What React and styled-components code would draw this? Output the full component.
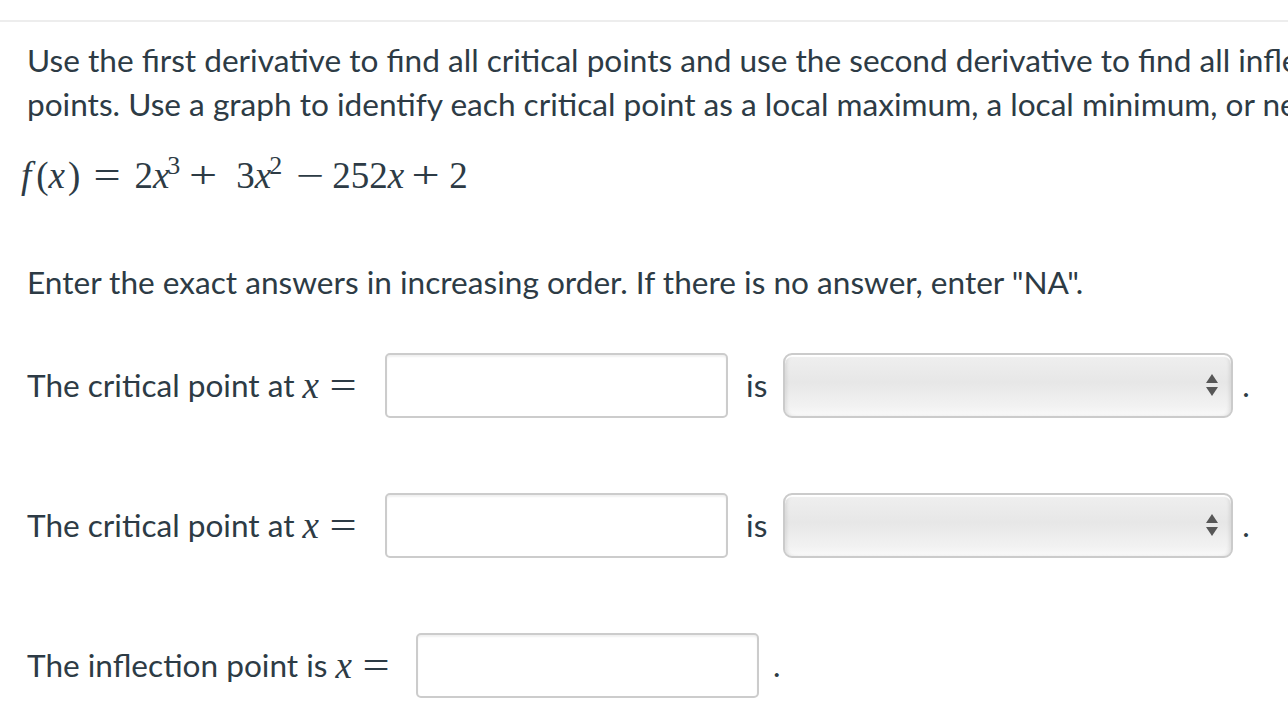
import React from "react";
import styled, { createGlobalStyle } from "styled-components";

const Global = createGlobalStyle`
  html, body {
    margin: 0;
    padding: 0;
    background: #ffffff;
    overflow: hidden;
  }
  body {
    font-family: "Lato", "Noto Sans", sans-serif;
    color: #2d3b45;
  }
`;

const Page = styled.main`
  width: 1288px;
  height: 722px;
  overflow: hidden;
`;

const TopRule = styled.div`
  height: 20px;
  border-bottom: 2px solid #ededed;
`;

const Question = styled.section`
  padding: 16px 0 0 27px;
`;

const Prose = styled.p`
  margin: 0;
  font-size: 31.6px;
  line-height: 44px;
  white-space: nowrap;
`;

const Equation = styled.div`
  margin: 26px 0 0 -6px;
  font-family: "Liberation Serif", "Times New Roman", serif;
  font-size: 37px;
  line-height: 48px;
  white-space: nowrap;
  color: #2d3b45;
`;

const Var = styled.i`
  font-style: italic;
  margin-right: ${(p) => p.$r || 0}px;
`;

const Sup = styled.sup`
  font-size: 26px;
  line-height: 0;
  vertical-align: 14px;
  margin-left: ${(p) => p.$l || 0}px;
`;

const Op = styled.span`
  display: inline-block;
  width: ${(p) => p.$w}px;
  margin: 0 ${(p) => p.$r}px 0 ${(p) => p.$l}px;
  text-align: center;
  transform: scaleX(${(p) => p.$s || 1.35});
`;

const Instruction = styled(Prose)`
  margin-top: 60px;
`;

const Rows = styled.div`
  display: flex;
  flex-direction: column;
  gap: 76px;
  margin-top: 49px;
`;

const Row = styled.div`
  display: flex;
  align-items: center;
  height: 64px;
  font-size: 31.6px;
  white-space: nowrap;
`;

const MathX = styled.span`
  font-family: "Liberation Serif", "Times New Roman", serif;
  font-size: 37px;
  font-style: italic;
  margin-left: 8px;
`;

const Equals = styled.span`
  display: inline-block;
  width: 24px;
  text-align: center;
  font-family: "Liberation Serif", "Times New Roman", serif;
  font-size: 37px;
  margin-left: 12px;
  transform: scaleX(1.3);
`;

const AnswerBox = styled.input`
  box-sizing: border-box;
  width: 343px;
  height: 65px;
  margin-left: ${(p) => p.$offset}px;
  border: 2px solid #cccccc;
  border-radius: 5px;
  background: #ffffff;
  box-shadow: inset 0 2px 2px rgba(0, 0, 0, 0.06);
  outline: none;
  font-family: inherit;
  font-size: 30px;
`;

const Word = styled.span`
  margin-left: 18px;
`;

const Select = styled.div`
  box-sizing: border-box;
  width: 450px;
  height: 65px;
  margin-left: 16px;
  border: 2px solid #cbcbcb;
  border-radius: 9px;
  background: linear-gradient(#efefef 0%, #e7e7e7 45%, #f2f2f2 85%, #f9f9f9 100%);
  box-shadow: inset 0 2px 1px #ffffff, inset 3px 0 4px -2px rgba(0, 0, 0, 0.12),
    inset -3px 0 4px -2px rgba(0, 0, 0, 0.12);
  display: flex;
  align-items: center;
  justify-content: flex-end;
  padding-right: 12px;
`;

const Period = styled.span`
  margin-left: ${(p) => p.$offset}px;
`;

function Arrows() {
  return (
    <svg width="14" height="24" viewBox="0 0 14 24">
      <polygon points="7,1 13,10 1,10" fill="#575757" />
      <polygon points="1,14 13,14 7,23" fill="#575757" />
    </svg>
  );
}

function Label({ children }) {
  return (
    <>
      <span>{children}</span>
      <MathX>x</MathX>
      <Equals>=</Equals>
    </>
  );
}

function CriticalRow() {
  return (
    <Row>
      <Label>The critical point at</Label>
      <AnswerBox $offset={30} />
      <Word>is</Word>
      <Select>
        <Arrows />
      </Select>
      <Period $offset={9}>.</Period>
    </Row>
  );
}

export default function App() {
  return (
    <>
      <Global />
      <Page>
        <TopRule />
        <Question>
          <Prose>
            Use the first derivative to find all critical points and use the second derivative to find all inflection
          </Prose>
          <Prose>
            points. Use a graph to identify each critical point as a local maximum, a local minimum, or neither.
          </Prose>
          <Equation>
            <Var $r={5}>f</Var>(<Var $r={3}>x</Var>)
            <Op $l={15} $w={24} $r={15} $s={1.3}>=</Op>2<Var>x</Var>
            <Sup $l={-2}>3</Sup>
            <Op $l={10} $w={26} $r={20}>+</Op>3<Var>x</Var>
            <Sup $l={-2}>2</Sup>
            <Op $l={16} $w={24} $r={10}>−</Op>252<Var>x</Var>
            <Op $l={8} $w={27} $r={10}>+</Op>2
          </Equation>
          <Instruction>Enter the exact answers in increasing order. If there is no answer, enter "NA".</Instruction>
          <Rows>
            <CriticalRow />
            <CriticalRow />
            <Row>
              <Label>The inflection point is</Label>
              <AnswerBox $offset={28} />
              <Period $offset={14}>.</Period>
            </Row>
          </Rows>
        </Question>
      </Page>
    </>
  );
}
